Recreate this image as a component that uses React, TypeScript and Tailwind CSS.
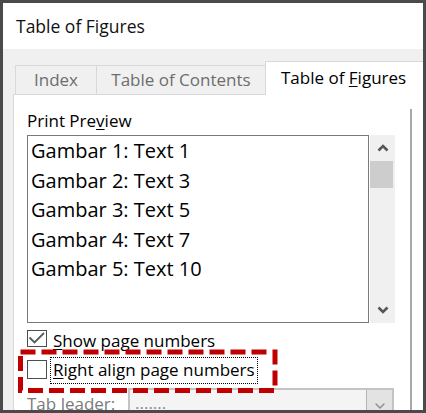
import { ChevronDown } from 'lucide-react'

const items = ['Gambar 1: Text 1', 'Gambar 2: Text 3', 'Gambar 3: Text 5', 'Gambar 4: Text 7', 'Gambar 5: Text 10']

function Chevron({ up }: { up?: boolean }) {
  return (
    <svg width="12" height="8" viewBox="0 0 12 8" className="text-[#555555]">
      <path d={up ? 'M1.5 6.5 L6 2 L10.5 6.5' : 'M1.5 1.5 L6 6 L10.5 1.5'} fill="none" stroke="currentColor" strokeWidth="2.6" />
    </svg>
  )
}

export default function App() {
  return (
    <div className="relative w-[426px] h-[413px] bg-[#4a4a4a] p-[3px] overflow-hidden font-['Open_Sans',_sans-serif] text-[17px] leading-[23px]">
      <div className="flex flex-col h-full overflow-hidden">
        {/* Title bar */}
        <div className="h-[46px] shrink-0 bg-white flex items-center pl-[13px] text-[17.5px] text-[#111111]">
          Table of Figures
        </div>

        {/* Dialog body */}
        <div className="flex-1 flex flex-col bg-[#f0f0f0] pl-[10px] pt-[12px] min-h-0">
          {/* Tabs */}
          <div className="flex items-end h-[33px] shrink-0">
            <div className="ml-[2px] w-[81px] h-[29px] border-l border-t border-[#d9d9d9] flex justify-center pt-[2px] text-[#6d6d6d]">
              Index
            </div>
            <div className="w-[169px] h-[29px] border-l border-t border-[#d9d9d9] flex justify-center pt-[2px] text-[#6d6d6d]">
              Table of Contents
            </div>
            <div className="relative z-10 -mb-px flex-1 h-[34px] bg-white border-l border-t border-[#d9d9d9] pl-[15px] pt-[4px] text-black whitespace-nowrap">
              Table of <span className="underline underline-offset-2">F</span>igures
            </div>
          </div>

          {/* Panel */}
          <div className="flex-1 min-h-0 bg-white border-l border-t border-[#d9d9d9] pl-[13px] pt-[14px] flex">
            <div className="w-[368px] shrink-0 flex flex-col">
              <div className="h-[23px] text-black">
                Print Pre<span className="underline underline-offset-2">v</span>iew
              </div>

              {/* Preview list */}
              <div className="mt-[3px] flex h-[188px] shrink-0">
                <div className="w-[342px] border border-[#7a7a7a] pl-[3px] text-[20px] leading-[29.5px] text-black">
                  {items.map((t) => (
                    <div key={t}>{t}</div>
                  ))}
                </div>
                <div className="ml-[1px] w-[25px] bg-[#f0f0f0] flex flex-col">
                  <div className="h-[26px] flex items-center justify-center">
                    <Chevron up />
                  </div>
                  <div className="h-[27px] mr-[2px] bg-[#cdcdcd]" />
                  <div className="flex-1" />
                  <div className="h-[26px] flex items-center justify-center">
                    <Chevron />
                  </div>
                </div>
              </div>

              {/* Show page numbers */}
              <div className="mt-[6px] flex items-start">
                <div className="mt-[1px] w-[20px] h-[17px] border border-[#4d4d4d] bg-white">
                  <svg width="18" height="15" viewBox="0 0 18 15">
                    <path d="M1.5 6.5 L6.5 11.5 L16 2" fill="none" stroke="#5a5a5a" strokeWidth="1.8" />
                  </svg>
                </div>
                <span className="ml-[6px] text-black">
                  <span className="underline underline-offset-2">S</span>how page numbers
                </span>
              </div>

              {/* Right align page numbers */}
              <div className="mt-[5px] flex items-start">
                <div className="mt-[3px] w-[20px] h-[19px] border border-[#4d4d4d] bg-white" />
                <span className="ml-[3px] border border-dotted border-black px-[2px] pb-[2px] text-black">
                  <span className="underline underline-offset-2">R</span>ight align page numbers
                </span>
              </div>

              {/* Tab leader */}
              <div className="mt-[4px] flex items-start">
                <span className="w-[101px] mt-[4px] text-[#7a7a7a] whitespace-nowrap">Tab leader:</span>
                <div className="w-[266px] h-[30px] border-2 border-[#c4c4c4] bg-[#f4f4f4] flex">
                  <div className="flex-1 pl-[5px] pt-[6px] text-[#8a8a8a] leading-[14px]">.......</div>
                  <div className="w-[26px] bg-[#e3e3e3] border-l border-[#b4b4b4] flex justify-center pt-[8px] text-[#8a8a8a]">
                    <ChevronDown size={16} strokeWidth={2} />
                  </div>
                </div>
              </div>
            </div>
            <div className="ml-[15px] border-l-2 border-[#a8a8a8]" />
          </div>
        </div>
      </div>

      {/* Red annotation */}
      <svg className="absolute left-0 top-0 pointer-events-none" width="426" height="413" viewBox="0 0 426 413">
        <rect x="20.5" y="352" width="254.5" height="38.5" fill="none" stroke="#c00000" strokeWidth="5" strokeDasharray="15 6" />
      </svg>
    </div>
  )
}
